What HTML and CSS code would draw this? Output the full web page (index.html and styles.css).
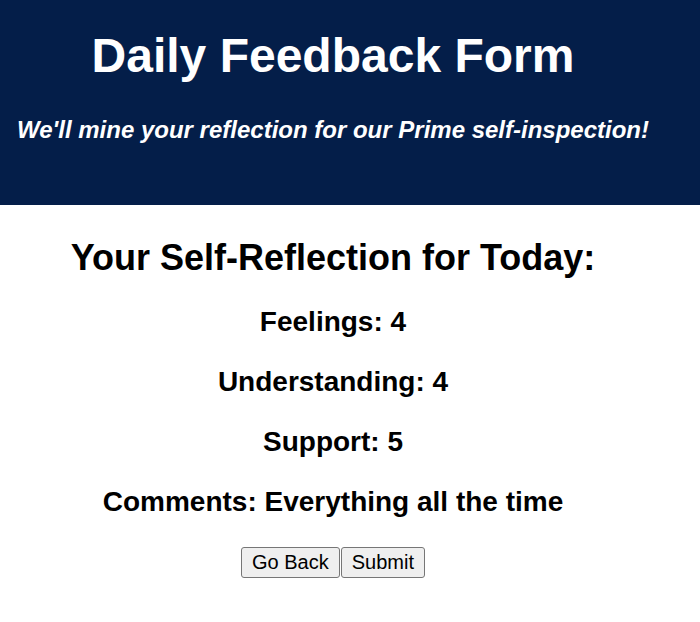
FILE: index.html
```html
<!DOCTYPE html>
<html lang="en">
<head>
<meta charset="utf-8">
<title>Daily Feedback Form</title>
<link rel="stylesheet" href="styles.css">
</head>
<body>
<div class="app">
  <header class="app-header">
    <h1 class="app-title">Daily Feedback Form</h1>
    <h4 class="app-subtitle">We'll mine your reflection for our Prime self-inspection!</h4>
  </header>
  <main class="review">
    <h2 class="review-title">Your Self-Reflection for Today:</h2>
    <h3 class="review-item">Feelings: 4</h3>
    <h3 class="review-item">Understanding: 4</h3>
    <h3 class="review-item">Support: 5</h3>
    <h3 class="review-item">Comments: Everything all the time</h3>
    <div class="actions"><button class="btn" type="button">Go Back</button><button class="btn" type="button">Submit</button></div>
  </main>
</div>
</body>
</html>
```
FILE: styles.css
```css
html, body {
  margin: 0;
  padding: 0;
  background: #ffffff;
}

body {
  font-family: "Liberation Sans", Arial, Helvetica, sans-serif;
  color: #000000;
}

.app {
  text-align: center;
}

.app-header {
  background: #041e49;
  color: #ffffff;
  padding: 28px 34px 61px 0;
  display: flow-root;
}

.app-title {
  font-size: 48px;
  font-weight: bold;
  margin: 0;
  line-height: 55px;
}

.app-subtitle {
  font-size: 24px;
  font-weight: bold;
  font-style: italic;
  margin: 33px 0 0;
  line-height: 28px;
}

.review {
  padding: 32px 34px 0 0;
}

.review-title {
  font-size: 36px;
  font-weight: bold;
  margin: 0 0 28px;
  line-height: 41px;
}

.review-item {
  font-size: 28px;
  font-weight: bold;
  margin: 0 0 28px;
  line-height: 32px;
}

.actions {
  padding-top: 1px;
  display: flex;
  justify-content: center;
  gap: 1px;
}

.btn {
  font-family: "Liberation Sans", Arial, Helvetica, sans-serif;
  font-size: 20px;
  line-height: 23px;
  color: #000000;
  background: #efefef;
  border: 1px solid #767676;
  border-radius: 3px;
  padding: 3px 10px;
  margin: 0;
}
```
